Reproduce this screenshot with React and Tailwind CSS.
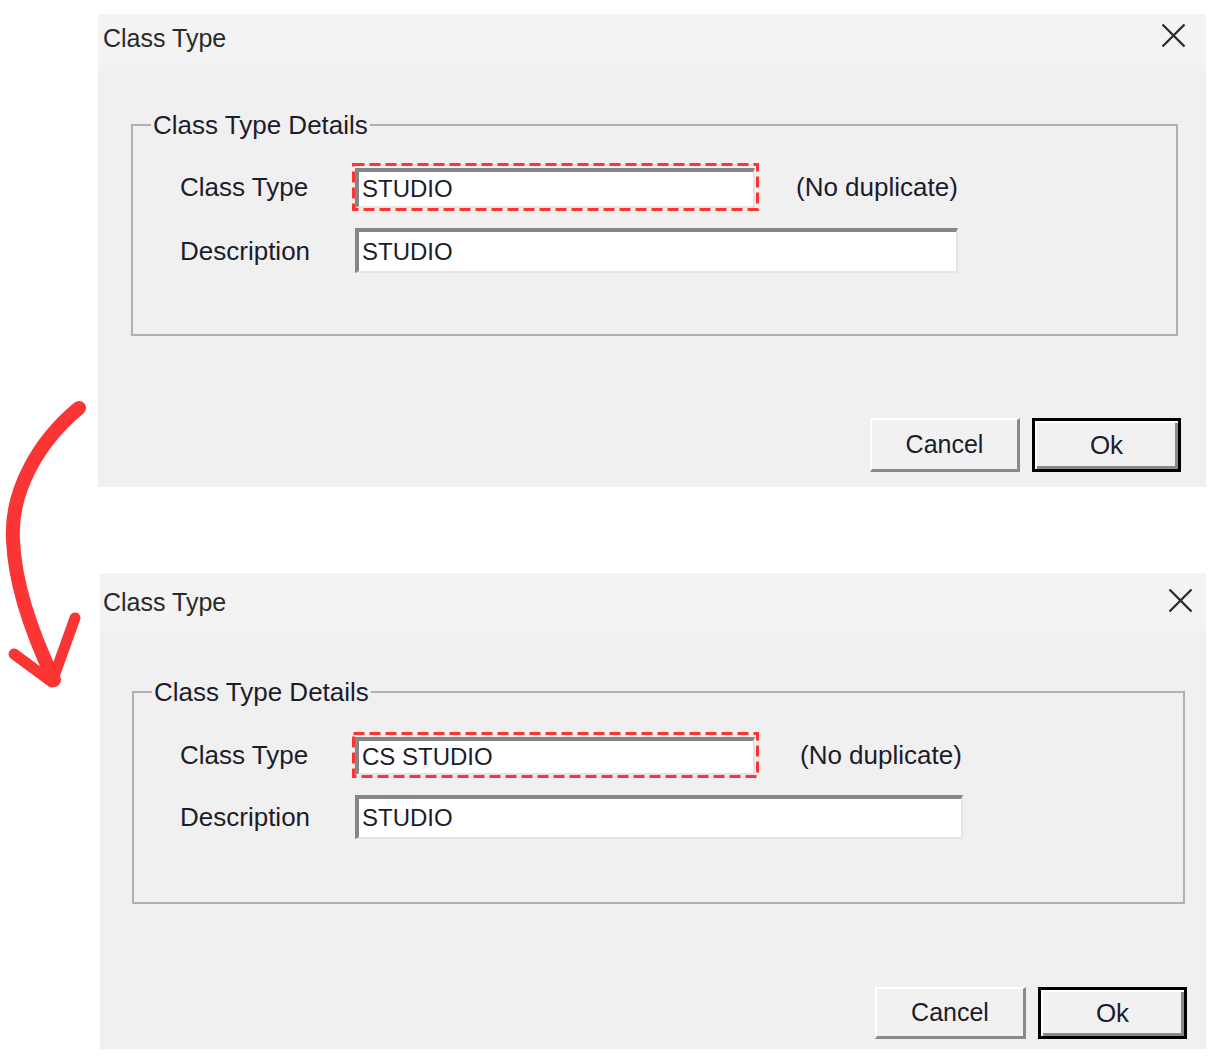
// two snapshots of the same dialog, before / after the rename
const DIALOGS = [
  {
    key: "before",
    value: "STUDIO",
    wrap: "ml-[98px] w-[1108px] h-[473px]",
    bar: "h-[51px] pl-[5px] pr-[20px] pb-[3px]",
    close: "mt-[9px]",
    group: "mt-[47px] ml-[33px] mr-[28px]",
    inner: "pt-[25px] pb-[61px] pl-[47px]",
    row1: "h-[48px]",
    row2: "h-[45px]",
    desc: "w-[603px]",
    note: "ml-[37px]",
    buttons: "mt-[82px] pr-[25px]",
    btn: "h-[54px]",
    cancel: "w-[150px]",
  },
  {
    key: "after",
    value: "CS STUDIO",
    wrap: "mt-[86px] ml-[100px] w-[1106px] h-[476px]",
    bar: "h-[58px] pl-[3px] pr-[13px]",
    close: "mt-[15px]",
    group: "mt-[48px] ml-[32px] mr-[21px]",
    inner: "pt-[27px] pb-[63px] pl-[46px]",
    row1: "h-[46px]",
    row2: "h-[44px]",
    desc: "w-[608px]",
    note: "ml-[41px]",
    buttons: "mt-[83px] pr-[19px]",
    btn: "h-[52px]",
    cancel: "w-[151px]",
  },
];

function CloseIcon({ className }) {
  return (
    <svg className={className} width="25" height="25" viewBox="0 0 25 25" fill="none">
      <path d="M1.5 1.5 L23.5 23.5 M23.5 1.5 L1.5 23.5" stroke="#2a2a2a" strokeWidth="2.3" />
    </svg>
  );
}

function Field({ value, className }) {
  return (
    <div className={`flex items-center bg-white border-t-[4px] border-l-[4px] border-b-2 border-r-2 border-[#e4e4e4] border-t-[#868686] border-l-[#868686] pl-[3px] text-[24px] leading-none text-[#1c1c2a] ${className}`}>
      {value}
    </div>
  );
}

function Dialog({ d }) {
  return (
    <div className={`flex flex-col bg-[#f0f0f0] ${d.wrap}`}>
      <div className={`flex items-center justify-between bg-[#f3f3f3] ${d.bar}`}>
        <span className="text-[25px] leading-none text-[#2a2a2a]">Class Type</span>
        <CloseIcon className={`self-start ${d.close}`} />
      </div>

      <fieldset className={`border-2 border-[#b0b0b0] p-0 ${d.group}`}>
        <legend className="ml-[18px] px-[2px] text-[26px] leading-none text-[#1c1c2a]">Class Type Details</legend>
        <div className={`grid grid-cols-[172px_1fr] gap-y-[17px] items-center text-[26px] leading-none text-[#1c1c2a] ${d.inner}`}>
          <span>Class Type</span>
          <div className={`flex items-center ${d.row1}`}>
            <div className="relative h-full w-[407px] p-[3px] pt-[5px] pr-[4px]">
              <Field value={d.value} className="h-full w-full border-b-0" />
              {/* red dashed highlight */}
              <svg className="absolute inset-0 w-full h-full" fill="none">
                <rect x="1.5" y="1.5" width="404" height="calc(100% - 3px)" stroke="#ff3333" strokeWidth="3" strokeDasharray="11 5" />
              </svg>
            </div>
            <span className={d.note}>(No duplicate)</span>
          </div>
          <span>Description</span>
          <Field value="STUDIO" className={`ml-[3px] ${d.row2} ${d.desc}`} />
        </div>
      </fieldset>

      <div className={`flex justify-end gap-[12px] ${d.buttons}`}>
        <button className={`border-t-2 border-l-2 border-b-[3px] border-r-[3px] border-white border-b-[#8a8a8a] border-r-[#8a8a8a] bg-[#f1f1f1] text-[25px] leading-none text-[#1c1c2a] ${d.btn} ${d.cancel}`}>
          Cancel
        </button>
        <button className={`w-[149px] border-[3px] border-black bg-[#f1f1f1] shadow-[inset_2px_2px_0_#ffffff,inset_-3px_-3px_0_#8a8a8a] text-[26px] leading-none text-[#1c1c2a] ${d.btn}`}>
          Ok
        </button>
      </div>
    </div>
  );
}

export default function App() {
  return (
    <div className="relative w-[1215px] h-[1056px] overflow-hidden bg-white pt-[14px] font-['Liberation_Sans',Arial,sans-serif]">
      {DIALOGS.map((d) => (
        <Dialog key={d.key} d={d} />
      ))}

      {/* hand-drawn red arrow between the two shots */}
      <svg className="absolute left-0 top-[390px] w-[100px] h-[310px]" viewBox="0 390 100 310" fill="none">
        <path d="M79 408 C40 440, 10 490, 13 540 C15 590, 35 640, 54 680" stroke="#fb3434" strokeWidth="14" strokeLinecap="round" />
        <path d="M14 654 L52 682 L75 618" stroke="#fb3434" strokeWidth="11" strokeLinecap="round" strokeLinejoin="round" />
      </svg>
    </div>
  );
}
